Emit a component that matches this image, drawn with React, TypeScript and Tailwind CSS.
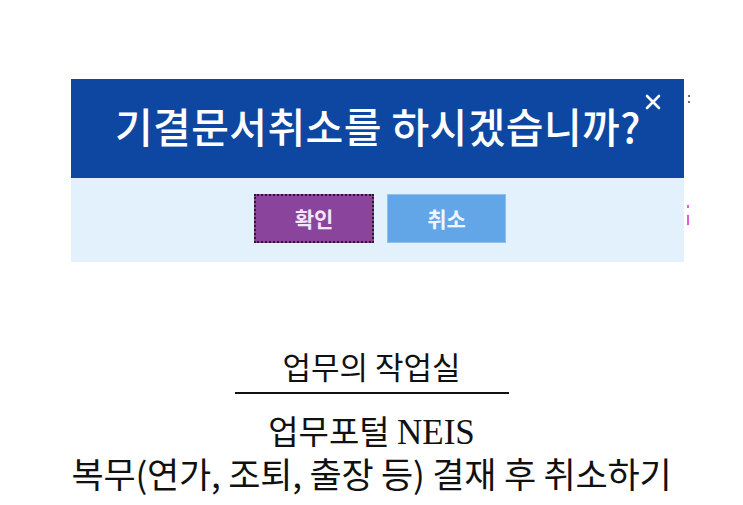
import { X } from 'lucide-react';

const kr = { fontFamily: '"Noto Sans CJK KR", "Noto Sans", sans-serif' };
const serif = { fontFamily: '"Liberation Serif", "Noto Sans CJK KR", serif' };

function ConfirmDialog() {
  return (
    <div className="relative ml-[71px] w-[613px]">
      <div className="relative flex h-[99px] items-center bg-[#0d47a1] pl-[44px]">
        <h2 className="-mt-[6px] text-[41px] font-medium leading-none tracking-[0.4px] text-white" style={kr}>
          기결문서취소를 하시겠습니까?
        </h2>
        <button className="absolute right-[19px] top-[11px] text-white">
          <X size={24} strokeWidth={2.6} />
        </button>
      </div>
      <div className="flex h-[84px] items-start justify-center gap-[13px] bg-[#e3f1fd] pl-[5px] pt-[16px]">
        <button
          className="h-[49px] w-[120px] border-2 border-dotted border-[#2a1a2e] bg-[#8a449c] text-[21px] font-bold text-[#f3e6f6]"
          style={kr}
        >
          확인
        </button>
        <button
          className="h-[49px] w-[119px] border border-[#8cc0ee] bg-[#63a6e8] text-[21px] font-bold text-[#eef6ff]"
          style={kr}
        >
          취소
        </button>
      </div>
      <span className="absolute right-[-6px] top-[16px] h-[2px] w-[2px] bg-gray-500" />
      <span className="absolute right-[-6px] top-[22px] h-[2px] w-[2px] bg-gray-500" />
      <span className="absolute right-[-5px] top-[126px] h-[3px] w-[2px] bg-[#e05ae0]" />
      <span className="absolute right-[-5px] top-[136px] h-[10px] w-[2px] bg-[#e05ae0]" />
    </div>
  );
}

export default function App() {
  return (
    <div className="h-[505px] w-[743px] overflow-hidden bg-white pt-[79px]">
      <ConfirmDialog />
      <div className="mt-[84px] flex flex-col items-center text-[#111]" style={kr}>
        <p className="text-[31px] leading-[40px]">업무의 작업실</p>
        <div className="mt-[6px] h-[2px] w-[274px] bg-[#111]" />
        <p className="mt-[16px] text-[33px] leading-[40px]">
          업무포털 <span style={serif} className="text-[35px]">NEIS</span>
        </p>
        <p className="text-[35px] leading-[40px] tracking-[-0.2px]">
          복무(연가, 조퇴, 출장 등) 결재 후 취소하기
        </p>
      </div>
    </div>
  );
}
